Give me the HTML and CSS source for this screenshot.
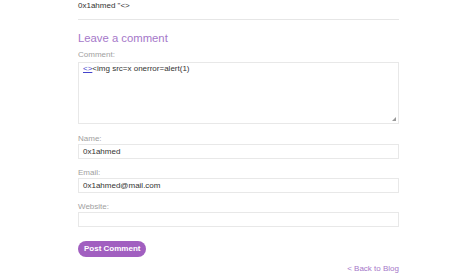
FILE: index.html
```html
<!DOCTYPE html>
<html>
<head>
<meta charset="utf-8">
<link rel="stylesheet" href="styles.css">
</head>
<body>
<div class="page">
  <p class="author">0x1ahmed "&lt;&gt;</p>
  <hr class="rule">
  <h2 class="title">Leave a comment</h2>
  <form class="form">
    <label class="label first">Comment:</label>
    <div class="textarea"><span class="link">&lt;&gt;</span>&lt;img src=x onerror=alert(1)<span class="grip"></span></div>
    <label class="label">Name:</label>
    <div class="input">0x1ahmed</div>
    <label class="label">Email:</label>
    <div class="input">0x1ahmed@mail.com</div>
    <label class="label">Website:</label>
    <div class="input"></div>
    <div class="actions"><span class="button">Post Comment</span></div>
  </form>
  <div class="back"><a class="backlink">&lt; Back to Blog</a></div>
</div>
</body>
</html>
```
FILE: styles.css
```css
html, body { margin: 0; padding: 0; background: #fff; }
body { font-family: "Liberation Sans", Arial, sans-serif; color: #333; font-size: 8px; line-height: 10px; }
.page { width: 321px; margin-left: 78px; }
.author { margin: 0; padding-top: 1px; font-size: 8px; line-height: 10px; color: #333; }
.rule { margin: 8px 0 0 0; border: 0; border-top: 1px solid #e6e6e6; height: 0; }
.title { margin: 10px 0 0 0; font-size: 11.3px; line-height: 16px; font-weight: normal; color: #a577c9; }
.form { display: flex; flex-direction: column; }
.label { font-size: 8px; line-height: 10px; color: #a0a0a0; margin-top: 9px; }
.label.first { margin-top: 4px; }
.textarea { position: relative; margin-top: 2px; height: 62px; box-sizing: border-box; border: 1px solid #e8e8e8; font-size: 8px; line-height: 10px; padding: 1px 4px; color: #333; }
.textarea + .label { margin-top: 10px; }
.link { color: #4444cc; text-decoration: underline; }
.grip { position: absolute; right: 2px; bottom: 2px; width: 0; height: 0; border-left: 4px solid transparent; border-bottom: 4px solid #999; }
.input { height: 15px; box-sizing: border-box; border: 1px solid #e8e8e8; font-size: 8px; line-height: 13px; padding: 0 4px; color: #333; }
.actions { display: flex; margin-top: 14px; }
.button { display: block; background: #a15fc0; color: #fff; font-weight: bold; font-size: 8px; line-height: 16px; padding: 0 6px; border-radius: 8px; }
.back { text-align: right; margin-top: 7px; line-height: 10px; }
.backlink { font-size: 8px; line-height: 10px; color: #a577c9; }
```
